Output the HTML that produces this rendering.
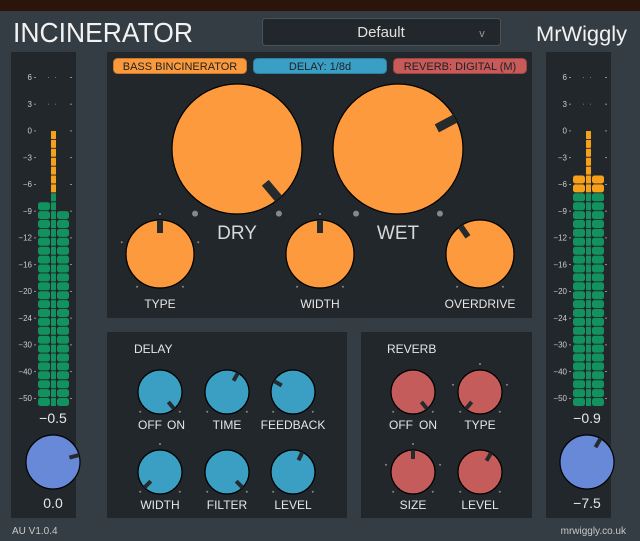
<!DOCTYPE html>
<html><head><meta charset="utf-8"><style>
html,body{margin:0;padding:0;background:#343d43;}
svg{display:block;font-family:"Liberation Sans",sans-serif;}
</style></head><body>
<svg id="s" width="640" height="541" viewBox="0 0 640 541" xmlns="http://www.w3.org/2000/svg">
<rect width="640" height="541" fill="#343d43"/>
<rect width="640" height="11" fill="#2b1409"/>
<text x="13" y="42" font-size="28" fill="#f2f2f2" textLength="180" lengthAdjust="spacingAndGlyphs">INCINERATOR</text>
<rect x="262.5" y="18.5" width="238" height="27" rx="3" fill="#22272b" stroke="#4a5358"/>
<text x="381" y="37" font-size="15" fill="#e0e0e0" text-anchor="middle">Default</text>
<text x="482" y="37" font-size="11" fill="#999" text-anchor="middle">v</text>
<text x="536" y="41" font-size="21" fill="#f2f2f2" textLength="91" lengthAdjust="spacingAndGlyphs">MrWiggly</text>

<rect x="11" y="52" width="65" height="466" fill="#22272b"/>
<rect x="546" y="52" width="65" height="466" fill="#22272b"/>
<rect x="107" y="52" width="425" height="266" fill="#22272b"/>
<rect x="107" y="332" width="240" height="186" fill="#22272b"/>
<rect x="361" y="332" width="171" height="186" fill="#22272b"/>

<rect x="113.5" y="58.5" width="133" height="15" rx="4" fill="#fa9a3c" stroke="#c9772a"/>
<text x="180" y="70" font-size="11" fill="#222" text-anchor="middle">BASS BINCINERATOR</text>
<rect x="253.5" y="58.5" width="133" height="15" rx="4" fill="#3a9fc4" stroke="#2d7f9e"/>
<text x="320" y="70" font-size="11" fill="#222" text-anchor="middle">DELAY: 1/8d</text>
<rect x="393.5" y="58.5" width="133" height="15" rx="4" fill="#c85a5a" stroke="#9c4444"/>
<text x="460" y="70" font-size="11" fill="#222" text-anchor="middle">REVERB: DIGITAL (M)</text>

<g id="meters"></g>
<g id="knobs"></g>

<g font-size="12" fill="#e6e6e6" text-anchor="middle">
<text x="237" y="239" font-size="19" fill="#d8d8d8">DRY</text>
<text x="398" y="239" font-size="19" fill="#d8d8d8">WET</text>
<text x="160" y="308">TYPE</text>
<text x="320" y="308">WIDTH</text>
<text x="480" y="308">OVERDRIVE</text>
<text x="134" y="353" style="text-anchor:start">DELAY</text>
<text x="150" y="429">OFF</text><text x="176" y="429">ON</text>
<text x="227" y="429">TIME</text>
<text x="293" y="429">FEEDBACK</text>
<text x="160" y="509">WIDTH</text>
<text x="227" y="509">FILTER</text>
<text x="293" y="509">LEVEL</text>
<text x="387" y="353" style="text-anchor:start">REVERB</text>
<text x="401" y="429">OFF</text><text x="428" y="429">ON</text>
<text x="480" y="429">TYPE</text>
<text x="413" y="509">SIZE</text>
<text x="480" y="509">LEVEL</text>
<text x="53" y="423" font-size="14">−0.5</text>
<text x="53" y="508" font-size="14">0.0</text>
<text x="587" y="423" font-size="14">−0.9</text>
<text x="587" y="508" font-size="14">−7.5</text>
</g>
<text x="12" y="534" font-size="10" fill="#c8c8c8">AU V1.0.4</text>
<text x="626" y="534" font-size="10" fill="#c8c8c8" text-anchor="end">mrwiggly.co.uk</text>
</svg>
<script>
var NS="http://www.w3.org/2000/svg";
function el(p,t,a){var e=document.createElementNS(NS,t);for(var k in a)e.setAttribute(k,a[k]);p.appendChild(e);return e;}
var M=document.getElementById("meters"),K=document.getElementById("knobs");
var labels=["6","3","0","-3","-6","-9","-12","-16","-20","-24","-30","-40","-50"];
[0,535].forEach(function(o){
 labels.forEach(function(l,i){var y=77+i*26.75;
  var t=el(M,"text",{x:32+o,y:y+3,"font-size":8,fill:"#ccc","text-anchor":"end"});t.textContent=l.replace("-","−");
  el(M,"rect",{x:34+o,y:y,width:2,height:0.8,fill:"#aaa"});
  el(M,"rect",{x:70+o,y:y,width:2,height:0.8,fill:"#aaa"});
  if(i<2){el(M,"rect",{x:48+o,y:y,width:1,height:0.8,fill:"#888"});el(M,"rect",{x:55+o,y:y,width:1,height:0.8,fill:"#888"});}
 });
});
function bar(x,w,top,orEnd,rx){
 for(var y=131;y<398;y+=8.9){if(y+8<top)continue;
  el(M,"rect",{x:x,y:y,width:w,height:8,rx:rx,fill:(y<orEnd?"#f7a11a":"#12925f")});}
}
bar(38,12,204,0,2.5);bar(51,5,131,186,0.5);bar(57,12,219,0,2.5);
bar(573,12,176,185,2.5);bar(586,5,131,185,0.5);bar(592,12,176,185,2.5);
function knob(cx,cy,r,col,ang,iw,il,dots){
 (dots||[]).forEach(function(d){var a=d*Math.PI/180,rr=r+(r>50?12:6);
  el(K,"circle",{cx:cx+rr*Math.sin(a),cy:cy-rr*Math.cos(a),r:r>50?3:1,fill:"#888"});});
 el(K,"circle",{cx:cx,cy:cy,r:r,fill:col,stroke:"#000","stroke-width":1.2});
 el(K,"rect",{x:cx-iw/2,y:cy-r,width:iw,height:il,fill:"#262a2d",transform:"rotate("+ang+" "+cx+" "+cy+")"});
}
var O="#fd9a3d",B="#3a9fc2",R="#c55c5c",L="#6789d8";
var sd=[-135,135];
knob(237,149,65,O,140,9,21,[-147,147]);
knob(398,149,65,O,62,9,21,[-147,147]);
knob(160,254,34,O,0,6,13,[-145,145,-73,73,0]);
knob(320,254,34,O,0,6,13,[-145,145,0]);
knob(480,254,34,O,-35,6,13,[-145,145]);
knob(160,392,22,B,140,4,9,sd);
knob(227,392,22,B,30,4,9,sd);
knob(293,392,22,B,-60,4,9,sd);
knob(160,472,22,B,-135,4,9,[-135,135,0]);
knob(227,472,22,B,135,4,9,sd);
knob(293,472,22,B,25,4,9,sd);
knob(413,392,22,R,140,4,9,sd);
knob(480,392,22,R,-140,4,9,[-135,135,-75,75,0]);
knob(413,472,22,R,0,4,9,[-135,135,-75,75,0]);
knob(480,472,22,R,30,4,9,sd);
knob(53,462,27,L,75,4,10,[]);
knob(587,462,27,L,30,4,10,[]);
</script>
</body></html>
